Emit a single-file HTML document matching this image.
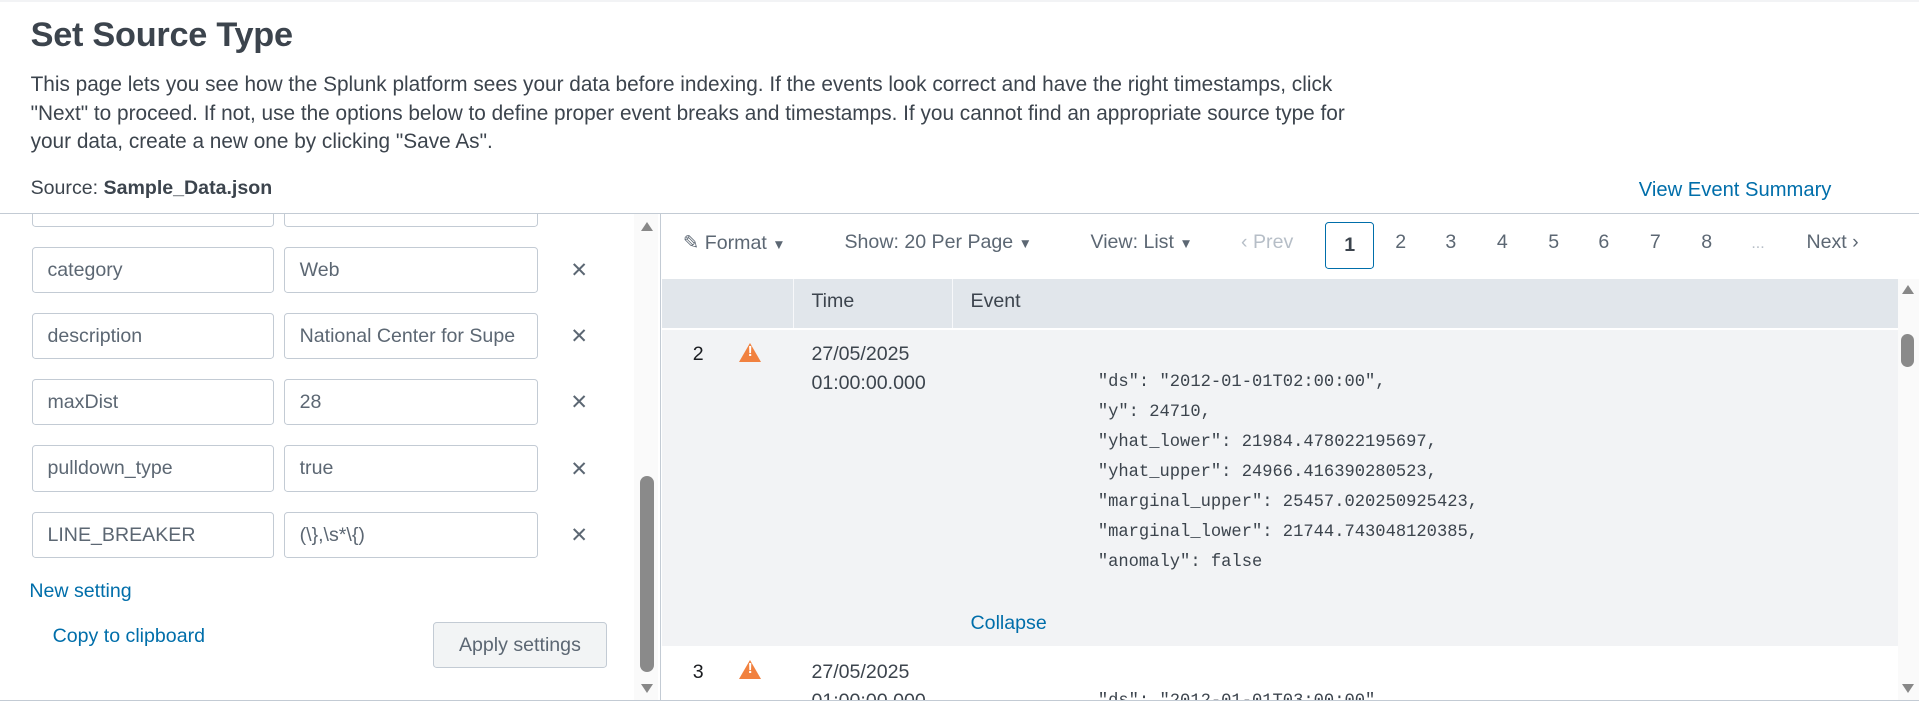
<!DOCTYPE html>
<html><head><meta charset="utf-8"><style>
html,body{margin:0;padding:0;background:#fff;overflow:hidden}
#w{zoom:1.2239;width:1568px;height:573px;position:relative;font-family:"Liberation Sans",sans-serif;color:#3c444d;overflow:hidden}
.a{position:absolute;white-space:nowrap}
h1{position:absolute;left:25px;top:13px;margin:0;font-size:28px;font-weight:bold;color:#3c444d;letter-spacing:-0.2px}
.p{left:25px;font-size:17px}
.box{position:absolute;height:36px;border:1px solid #c3cbd4;border-radius:3px;background:#fff;font-size:16px;line-height:36px;padding-left:12px;box-sizing:content-box;color:#5c6773;overflow:hidden}
.l{left:26px;width:184px}
.r{left:232px;width:194px}
.x{position:absolute;left:466px;font-size:17px;color:#5c6773}
.link{color:#006eaa;font-size:16px}
.tb{font-size:16px;color:#5c6773;top:189px}
.mono{font-family:"Liberation Mono",monospace;font-size:14px;color:#3c444d;left:897px}
.warn{position:absolute;width:0;height:0;border-left:9px solid transparent;border-right:9px solid transparent;border-bottom:16px solid #f1813f}
.warn:after{content:"!";position:absolute;left:-2px;top:1px;color:#fff;font-size:12px;font-weight:bold}
#lp{position:absolute;left:0;top:175px;width:539px;height:397px;overflow:hidden}
</style></head><body><div id="w">
<div class="a" style="left:0;top:0;width:1568px;height:2px;background:#f2f3f5"></div>
<h1>Set Source Type</h1>
<div class="a p" style="top:60px">This page lets you see how the Splunk platform sees your data before indexing. If the events look correct and have the right timestamps, click</div>
<div class="a p" style="top:83px">"Next" to proceed. If not, use the options below to define proper event breaks and timestamps. If you cannot find an appropriate source type for</div>
<div class="a p" style="top:106px">your data, create a new one by clicking "Save As".</div>
<div class="a p" style="top:145px;font-size:16px">Source: <b>Sample_Data.json</b></div>
<div class="a link" style="left:1339px;top:146px;font-size:16.5px">View Event Summary</div>
<div class="a" style="left:0;top:174px;width:1568px;height:1px;background:#c3cbd4"></div>
<!-- left panel -->
<div id="lp">
<div class="box l" style="top:-27px"></div><div class="box r" style="top:-27px"></div>
<div class="box l" style="top:27px">category</div><div class="box r" style="top:27px">Web</div><div class="x" style="top:36px">✕</div>
<div class="box l" style="top:81px">description</div><div class="box r" style="top:81px">National Center for Supe</div><div class="x" style="top:90px">✕</div>
<div class="box l" style="top:135px">maxDist</div><div class="box r" style="top:135px">28</div><div class="x" style="top:144px">✕</div>
<div class="box l" style="top:189px">pulldown_type</div><div class="box r" style="top:189px">true</div><div class="x" style="top:198px">✕</div>
<div class="box l" style="top:243px">LINE_BREAKER</div><div class="box r" style="top:243px">(\},\s*\{)</div><div class="x" style="top:252px">✕</div>
<div class="a link" style="left:24px;top:299px">New setting</div>
<div class="a link" style="left:43px;top:336px">Copy to clipboard</div>
<div class="a" style="left:354px;top:333px;width:140px;height:36px;border:1px solid #c3cbd4;border-radius:3px;background:#f2f4f5;font-size:16px;line-height:36px;text-align:center;color:#5c6773">Apply settings</div>
<div class="a" style="left:518px;top:0;width:20px;height:397px;background:#fafafa"></div>
<div class="a" style="left:524px;top:6px;border-left:5px solid transparent;border-right:5px solid transparent;border-bottom:8px solid #888"></div>
<div class="a" style="left:524px;top:384px;border-left:5px solid transparent;border-right:5px solid transparent;border-top:8px solid #888"></div>
<div class="a" style="left:523px;top:214px;width:11px;height:160px;border-radius:6px;background:#8a8a8a"></div>
</div>
<div class="a" style="left:539px;top:175px;width:1px;height:397px;background:#c3cbd4"></div>
<!-- toolbar -->
<div class="a tb" style="left:558px">✎ Format <span style="font-size:11px">▼</span></div>
<div class="a tb" style="left:690px">Show: 20 Per Page <span style="font-size:11px">▼</span></div>
<div class="a tb" style="left:891px">View: List <span style="font-size:11px">▼</span></div>
<div class="a tb" style="left:1014px;color:#b6bec7">‹ Prev</div>
<div class="a" style="left:1083px;top:181px;width:38px;height:37px;border:1px solid #006eaa;border-radius:3px;text-align:center;line-height:37px;font-size:16px;font-weight:bold;color:#3c444d">1</div>
<div class="a tb" style="left:1140px">2</div><div class="a tb" style="left:1181px">3</div><div class="a tb" style="left:1223px">4</div><div class="a tb" style="left:1265px">5</div><div class="a tb" style="left:1306px">6</div><div class="a tb" style="left:1348px">7</div><div class="a tb" style="left:1390px">8</div>
<div class="a tb" style="left:1431px;color:#b6bec7;font-size:13px;top:192px">...</div>
<div class="a tb" style="left:1476px">Next ›</div>
<!-- table -->
<div class="a" style="left:541px;top:228px;width:1010px;height:40px;background:#e1e6eb"></div>
<div class="a" style="left:648px;top:228px;width:1px;height:40px;background:#f7f8fa"></div>
<div class="a" style="left:778px;top:228px;width:1px;height:40px;background:#f7f8fa"></div>
<div class="a" style="left:663px;top:237px;font-size:16px">Time</div>
<div class="a" style="left:793px;top:237px;font-size:16px">Event</div>
<div class="a" style="left:541px;top:270px;width:1010px;height:258px;background:#f2f3f5"></div>
<div class="a" style="left:566px;top:280px;font-size:16px;color:#1a1c20">2</div>
<div class="warn" style="left:604px;top:280px"></div>
<div class="a" style="left:663px;top:280px;font-size:16px">27/05/2025</div>
<div class="a" style="left:663px;top:304px;font-size:16px">01:00:00.000</div>
<div class="a mono" style="top:305px">"ds": "2012-01-01T02:00:00",</div>
<div class="a mono" style="top:329px">"y": 24710,</div>
<div class="a mono" style="top:354px">"yhat_lower": 21984.478022195697,</div>
<div class="a mono" style="top:378px">"yhat_upper": 24966.416390280523,</div>
<div class="a mono" style="top:403px">"marginal_upper": 25457.020250925423,</div>
<div class="a mono" style="top:427px">"marginal_lower": 21744.743048120385,</div>
<div class="a mono" style="top:452px">"anomaly": false</div>
<div class="a link" style="left:793px;top:500px">Collapse</div>
<div class="a" style="left:566px;top:540px;font-size:16px;color:#1a1c20">3</div>
<div class="warn" style="left:604px;top:539px"></div>
<div class="a" style="left:663px;top:540px;font-size:16px">27/05/2025</div>
<div class="a" style="left:663px;top:564px;font-size:16px">01:00:00.000</div>
<div class="a mono" style="top:565px">"ds": "2012-01-01T03:00:00",</div>
<div class="a" style="left:1551px;top:228px;width:17px;height:344px;background:#fafafa"></div>
<div class="a" style="left:1554px;top:233px;border-left:5px solid transparent;border-right:5px solid transparent;border-bottom:8px solid #888"></div>
<div class="a" style="left:1554px;top:559px;border-left:5px solid transparent;border-right:5px solid transparent;border-top:8px solid #888"></div>
<div class="a" style="left:1553px;top:273px;width:11px;height:27px;border-radius:6px;background:#8a8a8a"></div>
<div class="a" style="left:0;top:572px;width:1568px;height:1px;background:#c3cbd4"></div>
</div></body></html>
